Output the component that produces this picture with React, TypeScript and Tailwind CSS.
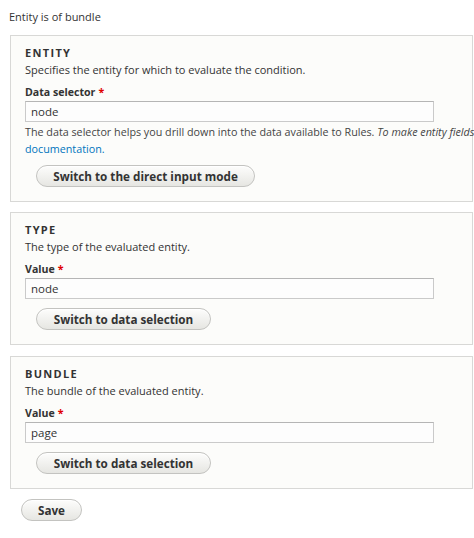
import React from "react";

function Btn({ label, w }: { label: string; w: string }) {
  return (
    <button
      type="button"
      className={`${w} flex h-[22px] items-center justify-center rounded-full border border-[#c3c3c0] bg-linear-to-b from-[#fdfdfc] to-[#e6e6e2] text-[11.7px] font-bold leading-[20px] text-[#333] shadow-[inset_0_1px_0_#fff]`}
    >
      {label}
    </button>
  );
}

function Req() {
  return <span className="ml-[3px] text-[#e00000]">*</span>;
}

function Panel({
  title,
  desc,
  label,
  value,
  help,
  button,
  buttonW,
  mt,
}: {
  title: string;
  desc: string;
  label: string;
  value: string;
  help?: React.ReactNode;
  button: string;
  buttonW: string;
  mt: string;
}) {
  return (
    <div className={`${mt} ml-[10px] w-[463px] border border-[#d8d8d6] bg-[#fcfcfa] pl-[14px] pt-[9px] pb-[14px]`}>
      <div className="h-[16px] text-[11px] font-bold uppercase leading-[16px] tracking-[0.12em] text-[#333]">
        {title}
      </div>
      <div className="h-[17px] text-[11px] leading-[17px] text-[#333]">{desc}</div>
      <div className="mt-[6px] h-[17px] text-[10.6px] font-bold leading-[17px] text-[#333]">
        {label}
        <Req />
      </div>
      <div className="flex h-[21px] w-[409px] items-center border border-[#cacaca] border-t-[#b5b5b5] bg-[#fdfdfd] px-[5px] text-[11.5px] text-[#333]">
        {value}
      </div>
      {help}
      <div className={`${help ? "mt-[7px]" : "mt-[9px]"} ml-[11px] flex`}>
        <Btn label={button} w={buttonW} />
      </div>
    </div>
  );
}

export default function App() {
  return (
    <div
      className="relative h-[538px] w-[474px] overflow-hidden bg-white text-[#333]"
      style={{ fontFamily: '"Open Sans", "Noto Sans", sans-serif' }}
    >
      <div className="pl-[9px] pt-[8px] text-[11px] leading-[17px]">Entity is of bundle</div>
      <Panel
        mt="mt-[10px]"
        title="Entity"
        desc="Specifies the entity for which to evaluate the condition."
        label="Data selector"
        value="node"
        help={
          <div className="h-[36px] whitespace-nowrap pt-[2px] text-[10.75px] leading-[17px] text-[#444]">
            The data selector helps you drill down into the data available to Rules.{" "}
            <em>To make entity fields appear in the data selector, you may have to use the condition 'entity has field'. More useful tips in the</em>
            <br />
            <a className="text-[#0074bd]" href="#">
              documentation.
            </a>
          </div>
        }
        button="Switch to the direct input mode"
        buttonW="w-[219px]"
      />
      <Panel
        mt="mt-[10px]"
        title="Type"
        desc="The type of the evaluated entity."
        label="Value"
        value="node"
        button="Switch to data selection"
        buttonW="w-[175px]"
      />
      <Panel
        mt="mt-[11px]"
        title="Bundle"
        desc="The bundle of the evaluated entity."
        label="Value"
        value="page"
        button="Switch to data selection"
        buttonW="w-[175px]"
      />
      <div className="mt-[10px] flex pl-[21px]">
        <Btn label="Save" w="w-[61px]" />
      </div>
    </div>
  );
}
